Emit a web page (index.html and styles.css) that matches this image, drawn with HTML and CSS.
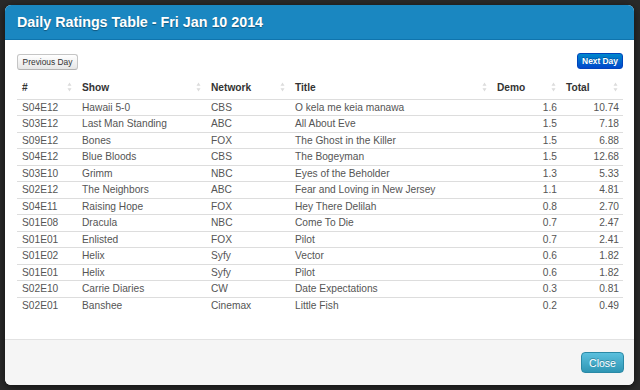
FILE: index.html
```html
<!DOCTYPE html>
<html>
<head>
<meta charset="utf-8">
<link rel="stylesheet" href="styles.css">
</head>
<body>
<div class="modal">
  <div class="modal-header">
    <h3 class="modal-title">Daily Ratings Table - Fri Jan 10 2014</h3>
  </div>
  <div class="modal-body">
    <div class="nav-row">
      <button class="btn btn-default">Previous Day</button>
      <button class="btn btn-primary">Next Day</button>
    </div>
    <table class="ratings">
      <thead>
        <tr>
          <th class="c-ep"><div class="th-in"><span>#</span><svg class="sort" viewBox="0 0 5 10"><path d="M2.5 0.5 L4.5 3.8 L0.5 3.8 Z M0.5 6.2 L4.5 6.2 L2.5 9.5 Z"/></svg></div></th>
          <th class="c-show"><div class="th-in"><span>Show</span><svg class="sort" viewBox="0 0 5 10"><path d="M2.5 0.5 L4.5 3.8 L0.5 3.8 Z M0.5 6.2 L4.5 6.2 L2.5 9.5 Z"/></svg></div></th>
          <th class="c-net"><div class="th-in"><span>Network</span><svg class="sort" viewBox="0 0 5 10"><path d="M2.5 0.5 L4.5 3.8 L0.5 3.8 Z M0.5 6.2 L4.5 6.2 L2.5 9.5 Z"/></svg></div></th>
          <th class="c-title"><div class="th-in"><span>Title</span><svg class="sort" viewBox="0 0 5 10"><path d="M2.5 0.5 L4.5 3.8 L0.5 3.8 Z M0.5 6.2 L4.5 6.2 L2.5 9.5 Z"/></svg></div></th>
          <th class="c-demo"><div class="th-in"><span>Demo</span><svg class="sort" viewBox="0 0 5 10"><path d="M2.5 0.5 L4.5 3.8 L0.5 3.8 Z M0.5 6.2 L4.5 6.2 L2.5 9.5 Z"/></svg></div></th>
          <th class="c-total"><div class="th-in"><span>Total</span><svg class="sort" viewBox="0 0 5 10"><path d="M2.5 0.5 L4.5 3.8 L0.5 3.8 Z M0.5 6.2 L4.5 6.2 L2.5 9.5 Z"/></svg></div></th>
        </tr>
      </thead>
      <tbody>
        <tr><td>S04E12</td><td>Hawaii 5-0</td><td>CBS</td><td>O kela me keia manawa</td><td class="num">1.6</td><td class="num">10.74</td></tr>
        <tr><td>S03E12</td><td>Last Man Standing</td><td>ABC</td><td>All About Eve</td><td class="num">1.5</td><td class="num">7.18</td></tr>
        <tr><td>S09E12</td><td>Bones</td><td>FOX</td><td>The Ghost in the Killer</td><td class="num">1.5</td><td class="num">6.88</td></tr>
        <tr><td>S04E12</td><td>Blue Bloods</td><td>CBS</td><td>The Bogeyman</td><td class="num">1.5</td><td class="num">12.68</td></tr>
        <tr><td>S03E10</td><td>Grimm</td><td>NBC</td><td>Eyes of the Beholder</td><td class="num">1.3</td><td class="num">5.33</td></tr>
        <tr><td>S02E12</td><td>The Neighbors</td><td>ABC</td><td>Fear and Loving in New Jersey</td><td class="num">1.1</td><td class="num">4.81</td></tr>
        <tr><td>S04E11</td><td>Raising Hope</td><td>FOX</td><td>Hey There Delilah</td><td class="num">0.8</td><td class="num">2.70</td></tr>
        <tr><td>S01E08</td><td>Dracula</td><td>NBC</td><td>Come To Die</td><td class="num">0.7</td><td class="num">2.47</td></tr>
        <tr><td>S01E01</td><td>Enlisted</td><td>FOX</td><td>Pilot</td><td class="num">0.7</td><td class="num">2.41</td></tr>
        <tr><td>S01E02</td><td>Helix</td><td>Syfy</td><td>Vector</td><td class="num">0.6</td><td class="num">1.82</td></tr>
        <tr><td>S01E01</td><td>Helix</td><td>Syfy</td><td>Pilot</td><td class="num">0.6</td><td class="num">1.82</td></tr>
        <tr><td>S02E10</td><td>Carrie Diaries</td><td>CW</td><td>Date Expectations</td><td class="num">0.3</td><td class="num">0.81</td></tr>
        <tr><td>S02E01</td><td>Banshee</td><td>Cinemax</td><td>Little Fish</td><td class="num">0.2</td><td class="num">0.49</td></tr>
      </tbody>
    </table>
  </div>
  <div class="modal-footer">
    <button class="btn btn-info">Close</button>
  </div>
</div>
</body>
</html>
```

FILE: styles.css
```css
html, body {
  margin: 0;
  padding: 0;
}
body {
  background: #2a2a2a;
  width: 640px;
  height: 390px;
  overflow: hidden;
  font-family: "Liberation Sans", Arial, sans-serif;
  padding: 5px 0 0 5px;
  box-sizing: border-box;
}
.modal {
  width: 629px;
  height: 380px;
  background: #fff;
  border-radius: 6px;
  box-shadow: 0 2px 8px rgba(0,0,0,0.6);
  display: flex;
  flex-direction: column;
  overflow: hidden;
}
.modal-header {
  height: 34px;
  background: #1a87c1;
  border-bottom: 1px solid #0f74ad;
  display: flex;
  align-items: center;
  padding-left: 12px;
  flex: none;
}
.modal-title {
  margin: 0;
  color: #fff;
  font-size: 14.3px;
  font-weight: bold;
  text-shadow: 0 1px 1px rgba(0,0,0,0.35);
}
.modal-body {
  flex: 1;
  padding: 13px 11px 0 12px;
}
.nav-row {
  display: flex;
  justify-content: space-between;
  align-items: flex-start;
  height: 25px;
}
.btn {
  font-family: "Liberation Sans", Arial, sans-serif;
  border-radius: 3px;
  cursor: pointer;
  padding: 0;
  line-height: 14px;
}
.btn-default {
  margin-top: 1px;
  height: 16px;
  width: 61px;
  font-size: 8.4px;
  color: #333;
  background: linear-gradient(#ffffff, #e6e6e6);
  border: 1px solid #c5c5c5;
  border-bottom-color: #b3b3b3;
}
.btn-primary {
  height: 16px;
  width: 46px;
  font-size: 8.4px;
  font-weight: bold;
  color: #fff;
  background: linear-gradient(#0088cc, #0048cc);
  border: 1px solid #0044bb;
  text-shadow: 0 -1px 0 rgba(0,0,0,0.25);
}
.btn-info {
  height: 21px;
  width: 43px;
  font-size: 10.5px;
  color: #fff;
  background: linear-gradient(#5bc0de, #2f96b4);
  border: 1px solid #2a89a6;
  border-radius: 4px;
  text-shadow: 0 -1px 0 rgba(0,0,0,0.25);
}
.ratings {
  width: 606px;
  border-collapse: collapse;
  font-size: 10.2px;
  color: #555;
  table-layout: fixed;
}
.ratings th,
.ratings td {
  box-sizing: border-box;
}
.ratings th {
  color: #333;
  font-weight: bold;
  text-align: left;
  height: 21px;
  padding: 0 5px 2px 5px;
  border-bottom: 1px solid #ddd;
}
.th-in {
  display: flex;
  justify-content: space-between;
  align-items: center;
}
.sort {
  width: 5px;
  height: 10px;
  fill: #dcdcdc;
}
.ratings td {
  height: 16.5px;
  padding: 0 4px 0 5px;
  border-top: 1px solid #ddd;
  white-space: nowrap;
}
.ratings tbody tr:first-child td {
  border-top: none;
}
.ratings td.num {
  text-align: right;
  padding-right: 4px;
}
.c-ep { width: 60px; }
.c-show { width: 129px; }
.c-net { width: 84px; }
.c-title { width: 202px; }
.c-demo { width: 69px; }
.c-total { width: 62px; }
.modal-footer {
  flex: none;
  background: #f5f5f5;
  border-top: 1px solid #e2e2e2;
  display: flex;
  justify-content: flex-end;
  align-items: center;
  padding-right: 10px;
  box-sizing: border-box;
  height: 46px;
}
```
